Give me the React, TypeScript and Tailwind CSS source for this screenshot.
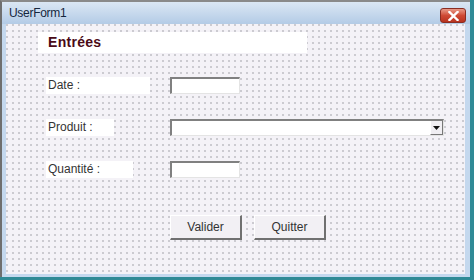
export default function App() {
  const sunken =
    "bg-white border-t-2 border-l-2 border-t-[#808080] border-l-[#808080] border-b border-r border-b-[#e4e4e4] border-r-[#e4e4e4]";
  const raised =
    "flex items-center justify-center bg-[#f2f0f4] border-t border-l border-t-white border-l-white border-b-2 border-r-2 border-b-[#707070] border-r-[#707070] text-[12px] text-[#333]";

  return (
    <div className="w-[474px] h-[280px] bg-[#2f8a96] overflow-hidden font-['Liberation_Sans',Arial,sans-serif]">
      <div className="w-[470px] h-[277px] bg-[#c4d8ee] border-l-2 border-t-2 border-l-[#6f6f6f] border-t-[#8a8a8a] flex flex-col">
        {/* Title bar */}
        <div className="h-[22px] shrink-0 flex items-center justify-between pl-[7px] pr-[4px] bg-gradient-to-b from-[#dbe7f4] to-[#b3cbe6]">
          <span className="text-[12px] text-[#15263d] tracking-[-0.3px]">UserForm1</span>
          <div className="w-[26px] h-[15px] mt-[5px] rounded-[3px] border border-[#8a2d22] bg-gradient-to-b from-[#e89a88] via-[#cf4a35] to-[#b8331f] flex items-center justify-center">
            <svg width="11" height="10" viewBox="0 0 11 10">
              <path d="M1.5 1 L9.5 9 M9.5 1 L1.5 9" stroke="white" strokeWidth="2.4" strokeLinecap="square" />
            </svg>
          </div>
        </div>

        {/* Client area */}
        <div className="ml-[4px] mr-[5px] h-[250px] shrink-0 bg-[#f4f2f7] bg-[radial-gradient(circle_at_1px_1px,#b6b6bc_0.6px,transparent_0.9px)] bg-[length:6px_6px] flex flex-col">
          <div className="ml-[32px] mt-[8px] w-[269px] h-[21px] bg-white flex items-center pl-[10px]">
            <span className="text-[14px] font-bold text-[#4a0a16] tracking-[0.3px]">Entrées</span>
          </div>

          <div className="flex mt-[24px] ml-[40px] h-[17px]">
            <div className="w-[124px]">
              <div className="w-[104px] h-[17px] bg-white pl-[2px] text-[12px] text-[#333] leading-[17px]">Date :</div>
            </div>
            <div className={`w-[70px] h-[17px] ${sunken}`} />
          </div>

          <div className="flex mt-[25px] ml-[40px] h-[17px]">
            <div className="w-[124px]">
              <div className="w-[68px] h-[17px] bg-white pl-[2px] text-[12px] text-[#333] leading-[17px]">Produit :</div>
            </div>
            <div className={`w-[274px] h-[17px] flex justify-end ${sunken}`}>
              <div className="w-[13px] h-[14px] bg-[#f0eef2] border-l border-l-white border-r border-r-[#777] border-b border-b-[#777] flex items-center justify-center">
                <svg width="7" height="4" viewBox="0 0 7 4">
                  <path d="M0 0 H7 L3.5 4 Z" fill="#111" />
                </svg>
              </div>
            </div>
          </div>

          <div className="flex mt-[25px] ml-[40px] h-[17px]">
            <div className="w-[124px]">
              <div className="w-[87px] h-[17px] bg-white pl-[2px] text-[12px] text-[#333] leading-[17px]">Quantité :</div>
            </div>
            <div className={`w-[70px] h-[17px] ${sunken}`} />
          </div>

          <div className="flex mt-[37px] ml-[164px] gap-[12px]">
            <div className={`w-[72px] h-[25px] ${raised}`}>Valider</div>
            <div className={`w-[72px] h-[25px] ${raised}`}>Quitter</div>
          </div>
        </div>
      </div>
    </div>
  );
}
